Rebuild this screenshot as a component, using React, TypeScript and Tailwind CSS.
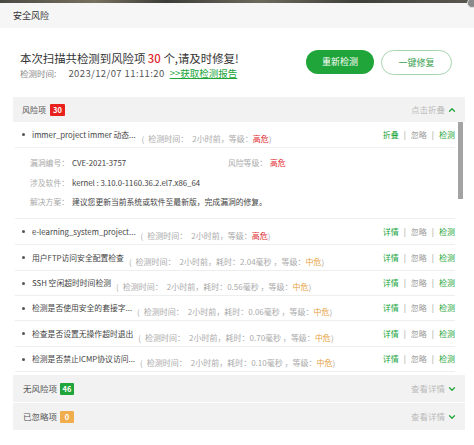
import { ChevronDown, ChevronUp } from "lucide-react";

type RiskRow = {
  title: string;
  cost?: string;
  level: "高危" | "中危";
};

const rows: RiskRow[] = [
  { title: "e-learning_system_project...", level: "高危" },
  { title: "用户FTP访问安全配置检查", cost: "2.04毫秒", level: "中危" },
  { title: "SSH 空闲超时时间检测", cost: "0.56毫秒", level: "中危" },
  { title: "检测是否使用安全的套接字...", cost: "0.06毫秒", level: "中危" },
  { title: "检查是否设置无操作超时退出", cost: "0.70毫秒", level: "中危" },
  { title: "检测是否禁止ICMP协议访问...", cost: "0.10毫秒", level: "中危" },
];

const rowHeights = ["h-[26px]", "h-[26px]", "h-[25px]", "h-[25px]", "h-[26px]", "h-[25px]"];

function Actions({ first }: { first: string }) {
  return (
    <div className="flex items-center text-[8px] shrink-0">
      <span className="text-[#20a53a]">{first}</span>
      <span className="mx-[5px] text-[#999]">|</span>
      <span className="text-[#999]">忽略</span>
      <span className="mx-[5px] text-[#999]">|</span>
      <span className="text-[#20a53a]">检测</span>
    </div>
  );
}

function Level({ level }: { level: string }) {
  return (
    <span className={level === "高危" ? "text-[#e0282e]" : "text-[#e6a23c]"}>{level}</span>
  );
}

function Meta({ cost, level }: { cost?: string; level: string }) {
  return (
    <span className="text-[8px] text-[#aaa]">
      ({"\u2002"}检测时间：{"\u2002"}2小时前，{cost ? `耗时：${cost} ，` : ""}等级：<Level level={level} />)
    </span>
  );
}

function Row({ row, h }: { row: RiskRow; h: string }) {
  return (
    <div className={`${h} flex items-center border-b border-[#eeeeee] pl-[7px]`}>
      <span className="w-[3px] h-[3px] rounded-full bg-[#555] shrink-0" />
      <div className="ml-[7px] flex-1 flex items-center whitespace-nowrap">
        <span className="text-[7.8px] text-[#444]">{row.title}</span>
        <span className="ml-[5px]">
          <Meta cost={row.cost} level={row.level} />
        </span>
      </div>
      <Actions first="详情" />
    </div>
  );
}

function SectionHeader({ label, count, badge, right }: { label: string; count: string; badge: string; right: string }) {
  return (
    <div className="h-[27px] flex items-center bg-[#f2f2f2] pl-[10px] pr-[8px]">
      <span className="text-[8.5px] text-[#555]">{label}</span>
      <span className={`ml-[3px] h-[12px] min-w-[14px] px-[2px] flex items-center justify-center text-[7.5px] font-bold text-white rounded-[1px] ${badge}`}>
        {count}
      </span>
      <span className="ml-auto text-[8.5px] text-[#bbb]">{right}</span>
      <ChevronDown size={10} strokeWidth={3} className="ml-[2px] text-[#20a53a]" />
    </div>
  );
}

export default function App() {
  return (
    <div
      className="relative w-[474px] h-[445px] bg-white overflow-hidden"
      style={{ fontFamily: '"Noto Sans CJK SC", "Noto Sans", sans-serif' }}
    >
      {/* blurred page behind the dialog */}
      <div className="h-[3px] bg-[linear-gradient(90deg,#4a4a44,#77705e_20%,#3c3c38_35%,#6d6a5c_55%,#3f3f3a_75%,#5a5850)]" />
      <div className="absolute right-[-3px] top-[-2px] w-[10px] h-[10px] rounded-full bg-[#8a8a8a] border border-[#ddd]" />

      {/* title bar */}
      <div className="h-[25px] flex items-center pl-[13px] bg-[#f6f6f6] text-[9px] text-[#333]">
        安全风险
      </div>

      {/* summary */}
      <div className="h-[69px] flex items-start pt-[22px] pl-[20px] pr-[22px]">
        <div className="flex-1 pt-[1px]">
          <div className="text-[11.4px] leading-[15px] text-[#333]">
            本次扫描共检测到风险项 <span className="text-[#e0282e] font-medium">30</span> 个,请及时修复!
          </div>
          <div className="mt-[1px] flex items-center leading-[12px]">
            <span className="text-[8.5px] text-[#888]">检测时间:</span>
            <span className="ml-[12px] text-[9.5px] tracking-[0.4px] text-[#555]">2023/12/07 11:11:20</span>
            <span className="ml-[5px] text-[9.5px] text-[#20a53a] underline">&gt;&gt;获取检测报告</span>
          </div>
        </div>
        <button className="w-[68px] h-[24px] rounded-full bg-[#20a53a] text-white text-[9px]">重新检测</button>
        <button className="ml-[7px] w-[71px] h-[25px] rounded-full border border-[#a8d5b0] text-[#3a9e4f] text-[9px]">一键修复</button>
      </div>

      {/* risk panel */}
      <div className="ml-[13px] w-[452px]">
        <div className="h-[25px] flex items-center bg-[#f2f2f2] pl-[9px] pr-[8px]">
          <span className="text-[8px] text-[#555]">风险项</span>
          <span className="ml-[4px] h-[12px] w-[15px] flex items-center justify-center text-[7.5px] font-bold text-white bg-[#e8211d] rounded-[1px]">
            30
          </span>
          <span className="ml-auto text-[8.5px] text-[#bbb]">点击折叠</span>
          <ChevronUp size={10} strokeWidth={3} className="ml-[2px] text-[#20a53a]" />
        </div>

        <div className="h-[250px] flex">
          <div className="flex-1 pl-[2px]">
            <div className="h-[26px] flex items-center border-b border-[#f0f0f0] pl-[7px]">
              <span className="w-[3px] h-[3px] rounded-full bg-[#555] shrink-0" />
              <div className="ml-[7px] flex-1 flex items-center whitespace-nowrap">
                <span className="text-[7.8px] text-[#444]">immer_project immer 动态...</span>
                <span className="ml-[6px]">
                  <Meta level="高危" />
                </span>
              </div>
              <Actions first="折叠" />
            </div>

            <div className="h-[71px] pt-[5px] pl-[15px] border-b border-[#eeeeee] text-[7.8px] leading-[19.5px] whitespace-nowrap">
              <div className="flex">
                <span className="w-[42px] text-[#aaa]">漏洞编号：</span>
                <span className="w-[156px] text-[#444]">CVE-2021-3757</span>
                <span className="w-[42px] text-[#aaa]">风险等级：</span>
                <span className="text-[#e0282e]">高危</span>
              </div>
              <div className="flex">
                <span className="w-[42px] text-[#aaa]">涉及软件：</span>
                <span className="text-[#444]">kernel : 3.10.0-1160.36.2.el7.x86_64</span>
              </div>
              <div className="flex">
                <span className="w-[42px] text-[#aaa]">解决方案：</span>
                <span className="text-[#444]">建议您更新当前系统或软件至最新版，完成漏洞的修复。</span>
              </div>
            </div>

            {rows.map((r, i) => (
              <Row key={r.title} row={r} h={rowHeights[i]} />
            ))}
          </div>
          {/* scrollbar */}
          <div className="w-[10px] pl-[3px] pr-[2px]">
            <div className="h-[77px] bg-[#a3a3a3]" />
          </div>
        </div>

        <div className="mt-[3px]">
          <SectionHeader label="无风险项" count="46" badge="bg-[#20a53a]" right="查看详情" />
          <div className="h-px bg-white" />
          <SectionHeader label="已忽略项" count="0" badge="bg-[#f0ad4e]" right="查看详情" />
        </div>
      </div>
    </div>
  );
}
